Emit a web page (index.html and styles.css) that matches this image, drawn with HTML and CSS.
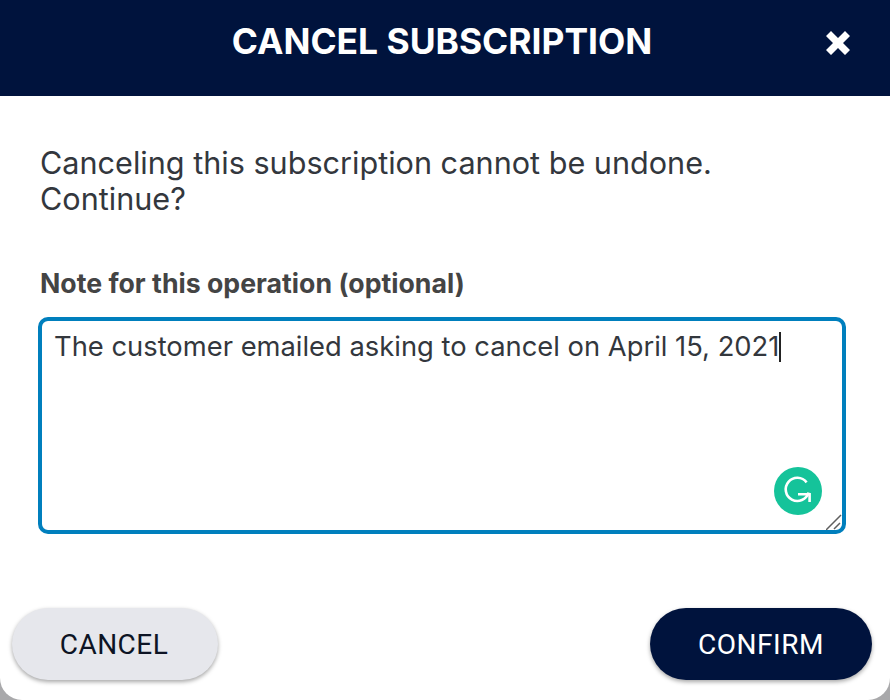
FILE: index.html
```html
<!DOCTYPE html>
<html lang="en">
<head>
<meta charset="utf-8">
<title>Cancel subscription</title>
<link rel="stylesheet" href="styles.css">
</head>
<body>
<div class="modal">
  <header class="modal-header">
    <h1 class="modal-title">CANCEL SUBSCRIPTION</h1>
    <button class="close" aria-label="Close">
      <svg viewBox="0 0 26 26" width="26" height="26"><path class="close-x" d="M1 6 L6 1 L13 8 L20 1 L25 6 L18 13 L25 20 L20 25 L13 18 L6 25 L1 20 L8 13 Z"/></svg>
    </button>
  </header>
  <main class="modal-body">
    <p class="message">Canceling this subscription cannot be undone.<br>Continue?</p>
    <label class="note-label">Note for this operation (optional)</label>
    <div class="note">
      <span class="note-text">The customer emailed asking to cancel on April 15, 2021</span><span class="caret"></span>
      <svg class="grammarly" viewBox="0 0 48 48" width="48" height="48">
        <circle cx="24" cy="24" r="24" fill="#15c39a"/>
        <path d="M34.5 25.5 A11.6 11.6 0 1 1 32.6 15.4" fill="none" stroke="#fff" stroke-width="2.6"/>
        <path d="M24 27.2 H35.6 V35" fill="none" stroke="#fff" stroke-width="2.6"/>
      </svg>
      <svg class="resizer" viewBox="0 0 16 16" width="16" height="16">
        <path d="M0 16 L15 1 M8 15 L14 9" stroke="#5f5f5f" stroke-width="1.5"/>
      </svg>
    </div>
  </main>
  <footer class="modal-footer">
    <button class="btn btn-cancel">CANCEL</button>
    <button class="btn btn-confirm">CONFIRM</button>
  </footer>
</div>
</body>
</html>
```
FILE: styles.css
```css
* { box-sizing: border-box; }
html, body { margin: 0; padding: 0; height: 700px; overflow: hidden; background: #a9a9ab; }
body { font-family: Inter, "Liberation Sans", sans-serif; }
.modal {
  width: 890px;
  height: 700px;
  background: #fff;
  border-radius: 0 0 22px 22px;
  display: flex;
  flex-direction: column;
  overflow: hidden;
}
.modal-header {
  height: 96px;
  flex: none;
  background: #00133d;
  display: flex;
  align-items: center;
  justify-content: center;
  position: relative;
  padding: 0 6px 13px 0;
}
.modal-title {
  margin: 0;
  color: #fff;
  font-size: 35.4px;
  font-weight: 700;
  line-height: 41px;
}
.close {
  position: absolute;
  right: 39px;
  top: 30px;
  width: 26px;
  height: 26px;
  padding: 0;
  border: 0;
  background: none;
  display: block;
}
.close-x { fill: #fff; }
.modal-body {
  flex: 1;
  padding: 49px 44px 0 38px;
  display: flex;
  flex-direction: column;
}
.message {
  margin: 0 0 0 2px;
  font-size: 30.6px;
  line-height: 36px;
  color: #33373d;
}
.note-label {
  margin: 49px 0 0 2px;
  font-size: 26.7px;
  line-height: 34px;
  font-weight: 700;
  color: #444;
}
.note {
  margin-top: 17px;
  height: 217px;
  border: 4px solid #007fbd;
  border-radius: 10px;
  padding: 9px 12px;
  font-size: 27.35px;
  line-height: 34px;
  color: #33373d;
  position: relative;
  white-space: nowrap;
}
.caret {
  display: inline-block;
  width: 2px;
  height: 30px;
  background: #222;
  vertical-align: -6px;
}
.grammarly { position: absolute; right: 20px; bottom: 15px; }
.resizer { position: absolute; right: 0; bottom: 0; }
.modal-footer {
  flex: none;
  height: 92px;
  padding: 0 18px 20px 12px;
  display: flex;
  justify-content: space-between;
  align-items: flex-start;
}
.btn {
  height: 72px;
  border: 0;
  border-radius: 36px;
  font-family: Roboto, "Liberation Sans", sans-serif;
  font-size: 28px;
  font-weight: 400;
  letter-spacing: 0.5px;
  box-shadow: 0 2px 4px rgba(0, 0, 0, 0.35);
}
.btn-cancel { width: 206px; padding-right: 8px; background: #e6e7ec; color: #0d1424; }
.btn-confirm { width: 222px; background: #00133d; color: #fff; }
```
